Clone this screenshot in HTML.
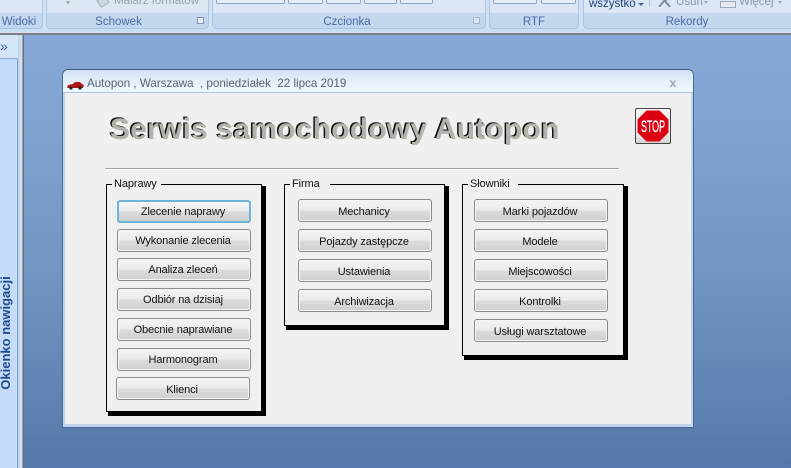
<!DOCTYPE html>
<html lang="pl"><head><meta charset="utf-8"><style>
html,body{margin:0;padding:0}
body{width:791px;height:468px;overflow:hidden;position:relative;font-family:"Liberation Sans",sans-serif;background:#5a80b0}
div{position:absolute;box-sizing:border-box}
.rib{top:-4px;height:33px;border:1px solid #aac4e2;border-top:0;border-radius:0 0 4px 4px;background:linear-gradient(#dbe7f5 0,#dbe7f5 17px,#c4d8ee 17px,#c2d7ee 100%)}
.rl{top:14px;height:14px;line-height:14px;font-size:11.5px;color:#4a6aa4;text-align:center;padding-top:1px}
.sm{top:-6px;height:10px;border:1px solid #8ea6c4;border-radius:2px;background:#e6eef8}
.btn{width:134px;height:23px;border:1px solid #8a8a8a;border-radius:3px;background:linear-gradient(#f3f3f3 0,#ebebeb 48%,#dcdcdc 52%,#cfcfcf 100%);box-shadow:inset 0 0 0 1px #f6f6f6;font-size:11px;letter-spacing:-.12px;line-height:22px;text-align:center;color:#111;padding-right:2px}
.l2{line-height:24px}
.box{background:#f0f0f0;border:1px solid #000;box-shadow:3px 3px 0 1px #000}
.lg{top:178px;height:13px;line-height:13px;font-size:11px;letter-spacing:-.1px;background:#f0f0f0;color:#111;padding-left:2px}
</style></head><body>
<div style="left:0;top:0;width:791px;height:29px;background:#d3e2f3"></div>
<div class="rib" style="left:-10px;width:53px"></div>
<div class="rl" style="left:0;width:38px">Widoki</div>
<div class="rib" style="left:46px;width:163px"></div>
<div class="rl" style="left:46px;width:145px">Schowek</div>
<div style="left:64px;top:0;font-size:8px;line-height:6px;color:#8aa;transform:scaleY(.6)">▼</div>
<div style="left:98px;top:-3px;width:10px;height:9px;background:#cfd8e2;border:1px solid #a9b4c0;transform:rotate(-35deg)"></div>
<div style="left:114px;top:-5px;font-size:11.5px;line-height:13px;color:#9aa3ad">Malarz formatów</div>
<div style="left:197px;top:17px;width:7px;height:7px;border:1px solid #7d94b5;background:#e8f0f8"></div>
<div class="rib" style="left:212px;width:274px"></div>
<div class="rl" style="left:212px;width:274px;padding-right:4px">Czcionka</div>
<div class="sm" style="left:216px;width:69px"></div>
<div class="sm" style="left:288px;width:35px"></div>
<div class="sm" style="left:326px;width:35px"></div>
<div class="sm" style="left:364px;width:33px"></div>
<div class="sm" style="left:400px;width:33px"></div>
<div style="left:473px;top:17px;width:7px;height:7px;border:1px solid #a5b6cc;background:#dce6f2"></div>
<div class="rib" style="left:489px;width:90px"></div>
<div class="rl" style="left:489px;width:90px">RTF</div>
<div class="sm" style="left:493px;width:44px"></div>
<div class="sm" style="left:541px;width:35px"></div>
<div class="rib" style="left:583px;width:215px"></div>
<div class="rl" style="left:583px;width:208px">Rekordy</div>
<div style="left:589px;top:-2px;font-size:11.5px;line-height:13px;color:#1f3f78">wszystko</div>
<div style="left:638px;top:3px;width:0;height:0;border:3px solid transparent;border-top:3px solid #4b6a98"></div>
<div style="left:649px;top:-4px;width:1px;height:11px;background:#b9c9dc"></div>
<svg style="position:absolute;left:658px;top:-2px" width="14" height="9"><path d="M1 9 L6 3 L11 0 M7 3 L12 9" stroke="#7f8b99" stroke-width="2" fill="none"/></svg>
<div style="left:676px;top:-4px;font-size:11.5px;line-height:13px;color:#8b98a8">Usuń</div>
<div style="left:704px;top:1px;width:0;height:0;border:2px solid transparent;border-top:3px solid #9aa8ba"></div>
<div style="left:720px;top:1px;width:16px;height:7px;border:1px solid #9eabb9;background:#e3eaf2"></div>
<div style="left:739px;top:-4px;font-size:11.5px;line-height:13px;color:#8b98a8">Więcej</div>
<div style="left:778px;top:1px;width:0;height:0;border:2px solid transparent;border-top:3px solid #9aa8ba"></div>

<div style="left:0;top:29px;width:791px;height:3px;background:#c8def4"></div>
<div style="left:0;top:32px;width:791px;height:1px;background:#dde"></div>
<div style="left:0;top:33px;width:791px;height:2px;background:#7a7f86"></div>

<div style="left:0;top:35px;width:18px;height:433px;background:#c5dcf8;border-right:1px solid #7f9fca"></div>
<div style="left:0;top:35px;width:18px;height:24px;background:#d6e6fa;border-bottom:1px solid #8aa8d0"></div>
<div style="left:0;top:38px;width:14px;font-size:14px;line-height:16px;color:#3d5f94">»</div>
<div style="left:18px;top:35px;width:6px;height:433px;background:linear-gradient(90deg,#b9cfe9,#d8e6f6 60%,#6f7782 85%,#5e6670)"></div>
<div style="left:-44px;top:324px;width:100px;height:18px;transform:rotate(-90deg);font-size:13px;font-weight:bold;line-height:18px;color:#1f4b8c;text-align:center;white-space:nowrap;display:flex;justify-content:center">Okienko nawigacji</div>

<div style="left:24px;top:35px;width:767px;height:433px;background:linear-gradient(#84a7d5 0,#81a4d2 20%,#6f93c0 60%,#5478a9 100%)"></div>

<div style="left:62px;top:69px;width:632px;height:359px;border:1px solid #4a6a92;border-top-color:#3f5b80;border-radius:6px 6px 0 0;background:#f0f0f0;box-shadow:inset 0 0 0 1px #b8d0ec"></div>
<div style="left:63px;top:70px;width:630px;height:23px;border-radius:5px 5px 0 0;background:linear-gradient(#d2e2f6,#e6f0fb 55%,#eef5fd);border-bottom:1px solid #a9c6e6"></div>
<div style="left:63px;top:93px;width:2px;height:333px;background:#c0d6ee"></div>
<div style="left:691px;top:93px;width:2px;height:333px;background:#c0d6ee"></div>
<div style="left:63px;top:424px;width:630px;height:3px;background:#c0d6ee"></div>
<svg style="position:absolute;left:67px;top:81px" width="17" height="9"><path d="M0 7 L1 4 L6 3 L8 1 L13 1 L15 3 L17 4 L16 7 Z" fill="#b01818"/><circle cx="4" cy="7" r="1.6" fill="#222"/><circle cx="13" cy="7" r="1.6" fill="#222"/></svg>
<div style="left:87px;top:77px;height:14px;font-size:11.6px;line-height:14px;color:#5a6472;white-space:pre">Autopon , Warszawa  , poniedziałek  22 lipca 2019</div>
<div style="left:668px;top:77px;width:10px;height:12px;font-size:12px;line-height:12px;font-weight:bold;color:#9aa4ae;text-align:center">x</div>

<div style="left:110px;top:112px;height:35px;font-size:30px;line-height:35px;font-weight:bold;white-space:nowrap;color:#b5b2ac;letter-spacing:.22px;text-shadow:-1.5px -1px 0 #111">Serwis samochodowy Autopon</div>

<div style="left:635px;top:108px;width:36px;height:36px;border:1px solid #444;border-radius:2px;background:linear-gradient(#f2f2f2,#f0f0f0 70%,#d4d4d4)"></div>
<svg style="position:absolute;left:637px;top:110px" width="32" height="32"><polygon points="9.5,0.5 22.5,0.5 31.5,9.5 31.5,22.5 22.5,31.5 9.5,31.5 0.5,22.5 0.5,9.5" fill="#dd0010"/><text x="16" y="22" font-family="Liberation Sans, sans-serif" font-size="17" fill="#fff" stroke="#fff" stroke-width=".3" text-anchor="middle" textLength="24" lengthAdjust="spacingAndGlyphs">STOP</text></svg>

<div style="left:105px;top:168px;width:514px;height:1px;background:#a5a5a5"></div>
<div style="left:105px;top:169px;width:514px;height:1px;background:#fff"></div>

<div class="box" style="left:106px;top:184px;width:156px;height:228px"></div>
<div class="lg" style="left:112px;width:49px">Naprawy</div>
<div class="box" style="left:284px;top:184px;width:161px;height:142px"></div>
<div class="lg" style="left:290px;width:40px">Firma</div>
<div class="box" style="left:462px;top:184px;width:162px;height:172px"></div>
<div class="lg" style="left:468px;width:50px">Słowniki</div>

<div class="btn" style="left:117px;top:200px;border:2px solid #6cb4d8;line-height:20px;box-shadow:none">Zlecenie naprawy</div>
<div class="btn" style="left:117px;top:229px">Wykonanie zlecenia</div>
<div class="btn" style="left:117px;top:258px">Analiza zleceń</div>
<div class="btn" style="left:117px;top:288px">Odbiór na dzisiaj</div>
<div class="btn" style="left:117px;top:318px">Obecnie naprawiane</div>
<div class="btn" style="left:117px;top:348px">Harmonogram</div>
<div class="btn l2" style="left:116px;top:377px">Klienci</div>

<div class="btn l2" style="left:298px;top:199px">Mechanicy</div>
<div class="btn l2" style="left:298px;top:229px">Pojazdy zastępcze</div>
<div class="btn l2" style="left:298px;top:259px">Ustawienia</div>
<div class="btn l2" style="left:298px;top:289px">Archiwizacja</div>

<div class="btn l2" style="left:474px;top:199px">Marki pojazdów</div>
<div class="btn l2" style="left:474px;top:229px">Modele</div>
<div class="btn l2" style="left:474px;top:259px">Miejscowości</div>
<div class="btn l2" style="left:474px;top:289px">Kontrolki</div>
<div class="btn l2" style="left:474px;top:319px">Usługi warsztatowe</div>
</body></html>
